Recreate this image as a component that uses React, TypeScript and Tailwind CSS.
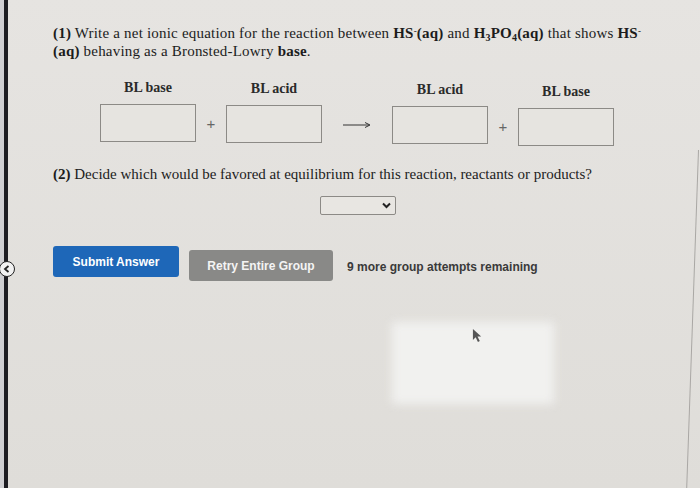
import React from "react";

const serif = { fontFamily: '"Liberation Serif", "Times New Roman", serif' };
const sans = { fontFamily: '"Liberation Sans", Arial, sans-serif' };

function Col({ label, mt }: { label: string; mt: string }) {
  return (
    <div className={`flex flex-col items-center ${mt}`}>
      <div className="text-[14px] font-bold text-[#2a2a2a] leading-[18px] h-[18px]" style={serif}>
        {label}
      </div>
      <div className="mt-[7px] w-[96px] h-[38px] border border-[#8c8a86] bg-[#e6e4e0]" />
    </div>
  );
}

function Plus({ top }: { top: string }) {
  return (
    <div className="w-[30px] flex flex-col items-center">
      <div className={top} />
      <div className="h-[38px] flex items-center justify-center text-[15px] text-[#666]" style={sans}>
        +
      </div>
    </div>
  );
}

export default function App() {
  return (
    <div className="relative w-[700px] h-[488px] overflow-hidden bg-gradient-to-b from-[#e6e4e1] to-[#dfddd9]">
      {/* left bezel */}
      <div className="absolute left-0 top-0 h-full w-[4px] bg-[#cfcfd2]" />
      <div className="absolute left-[4px] top-0 h-full w-[4px] bg-[#1d1d22]" />
      <div className="absolute left-[-1px] top-[261px] w-[16px] h-[16px] rounded-full bg-[#f2f2f2] border border-[#222] flex items-center justify-center">
        <svg width="8" height="8" viewBox="0 0 8 8">
          <path d="M5.5 1 L2 4 L5.5 7" stroke="#222" strokeWidth="1.8" fill="none" />
        </svg>
      </div>
      {/* right edge */}
      <div className="absolute left-[698px] top-[150px] h-[345px] w-[1px] bg-[#a9a7a4] rotate-[2deg] origin-top" />

      <div className="pl-[53px] pt-[24px] pr-[40px]">
        <div className="text-[15px] leading-[18px] text-[#1c1c1c] tracking-[0.2px]" style={serif}>
          <span className="font-bold">(1)</span> Write a net ionic equation for the reaction between{" "}
          <span className="font-bold">
            HS<sup className="text-[9px]">-</sup>(aq)
          </span>{" "}
          and{" "}
          <span className="font-bold">
            H<sub className="text-[10px]">3</sub>PO<sub className="text-[10px]">4</sub>(aq)
          </span>{" "}
          that shows{" "}
          <span className="font-bold">
            HS<sup className="text-[9px]">-</sup>
          </span>
          <br />
          <span className="font-bold">(aq)</span> behaving as a Bronsted-Lowry{" "}
          <span className="font-bold">base</span>.
        </div>

        <div className="flex items-start ml-[47px] mt-[19px]">
          <Col label="BL base" mt="mt-0" />
          <Plus top="h-[26px]" />
          <Col label="BL acid" mt="mt-[1px]" />
          <div className="w-[70px] flex flex-col items-center">
            <div className="h-[27px]" />
            <div className="h-[38px] flex items-center justify-center">
              <svg width="28" height="8" viewBox="0 0 28 8">
                <path d="M0 4 H26" stroke="#333" strokeWidth="1" />
                <path d="M22 1.5 L27 4 L22 6.5" stroke="#333" strokeWidth="1" fill="none" />
              </svg>
            </div>
          </div>
          <Col label="BL acid" mt="mt-[2px]" />
          <Plus top="h-[29px]" />
          <Col label="BL base" mt="mt-[4px]" />
        </div>

        <div className="mt-[19px] text-[15px] leading-[18px] text-[#1c1c1c]" style={serif}>
          <span className="font-bold">(2)</span> Decide which would be favored at equilibrium for this reaction, reactants or products?
        </div>

        <div className="mt-[13px] ml-[267px] w-[76px] h-[19px] border border-[#8c8a86] rounded-[2px] bg-[#e8e6e2] flex items-center justify-end pr-[4px]">
          <svg width="9" height="7" viewBox="0 0 9 7">
            <path d="M1 1.5 L4.5 5 L8 1.5" stroke="#222" strokeWidth="2" fill="none" />
          </svg>
        </div>

        <div className="mt-[31px] flex items-start" style={sans}>
          <div className="w-[126px] h-[31px] rounded-[3px] bg-[#1e67b8] flex items-center justify-center text-white text-[12px] font-bold">
            Submit Answer
          </div>
          <div className="ml-[10px] mt-[4px] w-[144px] h-[31px] rounded-[3px] bg-[#898987] flex items-center justify-center text-[#f4f4f4] text-[12px] font-bold">
            Retry Entire Group
          </div>
          <div className="ml-[14px] mt-[13px] text-[12px] leading-[16px] font-bold text-[#3a3a3a]">
            9 more group attempts remaining
          </div>
        </div>
      </div>

      {/* screen glare and cursor */}
      <div className="absolute left-[392px] top-[322px] w-[162px] h-[82px] bg-[#f1f1ef] blur-[5px]" />
      <svg className="absolute left-[472px] top-[328px]" width="11" height="15" viewBox="0 0 12 16">
        <path d="M1 1 L1 13 L4 10 L6.5 15 L8.5 14 L6 9 L10 9 Z" fill="#555" />
      </svg>
    </div>
  );
}
